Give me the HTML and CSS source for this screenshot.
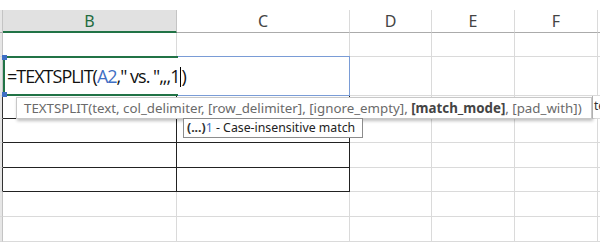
FILE: index.html
```html
<!DOCTYPE html>
<html lang="en">
<head>
  <meta charset="UTF-8" />
  <title>TEXTSPLIT</title>
  <link rel="stylesheet" href="styles.css">
</head>
<body>

  <div class="sheet">
    <!-- top strip -->
    <div class="gap"></div><div class="gap"></div><div class="gap"></div><div class="gap"></div><div class="gap"></div><div class="gap"></div><div class="gap"></div>

    <!-- column headers -->
    <div class="cell hd rh"></div>
    <div class="cell hd sel">B</div>
    <div class="cell hd">C</div>
    <div class="cell hd">D</div>
    <div class="cell hd">E</div>
    <div class="cell hd">F</div>
    <div class="cell hd end"></div>

    <!-- row 1 -->
    <div class="cell rh"></div><div class="cell"></div><div class="cell"></div><div class="cell"></div><div class="cell"></div><div class="cell"></div><div class="cell end"></div>
    <!-- row 2 (editing) -->
    <div class="cell rh"></div><div class="cell"></div><div class="cell"></div><div class="cell"></div><div class="cell"></div><div class="cell"></div><div class="cell end"></div>
    <!-- rows 3-6, bordered table -->
    <div class="cell rh bl"></div><div class="cell bd"></div><div class="cell bd"></div><div class="cell"></div><div class="cell"></div><div class="cell"></div><div class="cell end"></div>
    <div class="cell rh bl"></div><div class="cell bd"></div><div class="cell bd"></div><div class="cell"></div><div class="cell"></div><div class="cell"></div><div class="cell end"></div>
    <div class="cell rh bl"></div><div class="cell bd"></div><div class="cell bd"></div><div class="cell"></div><div class="cell"></div><div class="cell"></div><div class="cell end"></div>
    <div class="cell rh bl"></div><div class="cell bd"></div><div class="cell bd"></div><div class="cell"></div><div class="cell"></div><div class="cell"></div><div class="cell end"></div>
    <!-- rows 7-8 -->
    <div class="cell rh"></div><div class="cell"></div><div class="cell"></div><div class="cell"></div><div class="cell"></div><div class="cell"></div><div class="cell end"></div>
    <div class="cell rh"></div><div class="cell"></div><div class="cell"></div><div class="cell"></div><div class="cell"></div><div class="cell"></div><div class="cell end"></div>

    <!-- in-cell editor -->
    <div class="editor">
      <span class="formula">=TEXTSPLIT(<span class="ref">A2</span>," vs. ",,,1<span class="caret"></span>)</span>
    </div>
    <div class="active-cell">
      <span class="handle h-top"></span>
      <span class="handle h-bottom"></span>
    </div>

    <!-- function tooltip -->
    <div class="tip">TEXTSPLIT(text, col_delimiter, [row_delimiter], [ignore_empty], <b>[match_mode]</b>, [pad_with])</div>
    <div class="tip-edge">te</div>
    <div class="tip-list"><b>(...)</b><span class="num">1</span> - Case-insensitive match</div>
  </div>

</body>
</html>
```

FILE: styles.css
```css
body {
  margin: 0;
  background: #fff;
  font-family: 'Noto Sans', sans-serif;
}

.sheet {
  position: relative;
  width: 600px;
  height: 243px;
  overflow: hidden;
  display: grid;
  grid-template-columns: 3px 174px 173px 82px 83px 83px 2px;
  grid-template-rows: 10px 23px 24px 39px 23px 24px 25px 24px 25px 25px;
}

.gap {
  background: #fff;
}

.cell {
  box-sizing: border-box;
  border-right: 1px solid #dadada;
  border-bottom: 1px solid #dadada;
}

.cell.rh {
  background: #e6e6e6;
  border-right-color: #c4c4c4;
}

.cell.end {
  border-right: none;
}

.hd {
  background: #fff;
  border-bottom-color: #ababab;
  color: #444;
  font-size: 16px;
  text-align: center;
  line-height: 22px;
}

.hd.sel {
  background: #e1e1e1;
  color: #1e6b3f;
  border-right-color: #c4c4c4;
  border-bottom: 2px solid #217346;
}

.cell.bd {
  border-right-color: #222;
  border-bottom-color: #222;
}

.cell.bl {
  border-right-color: #333;
}

.editor {
  position: absolute;
  left: 3px;
  top: 56px;
  width: 347px;
  height: 40px;
  box-sizing: border-box;
  border: 1px solid #7a9cd6;
  background: #fff;
  display: flex;
  align-items: center;
  padding-left: 3px;
}

.formula {
  font-family: 'Open Sans', sans-serif;
  font-size: 18px;
  letter-spacing: -1px;
  color: #111;
}

.ref {
  color: #3f6fc4;
}

.caret {
  display: inline-block;
  width: 1px;
  height: 20px;
  background: #000;
  vertical-align: -4px;
  margin-left: 1px;
}

.active-cell {
  position: absolute;
  left: 3px;
  top: 56px;
  width: 175px;
  height: 40px;
  box-sizing: border-box;
  border: 2px solid #217346;
  border-right: none;
}

.handle {
  position: absolute;
  left: -3px;
  width: 5px;
  height: 5px;
  background: #3f6fc4;
}

.h-top {
  top: -3px;
}

.h-bottom {
  bottom: -3px;
}

.tip {
  position: absolute;
  left: 16px;
  top: 97px;
  width: 576px;
  height: 22px;
  box-sizing: border-box;
  background: #fff;
  border: 1px solid #c8c8c8;
  box-shadow: 1px 2px 3px rgba(0, 0, 0, 0.25);
  color: #6a6a6a;
  font-size: 13.3px;
  line-height: 20px;
  padding-left: 7px;
  white-space: nowrap;
}

.tip b {
  color: #444;
}

.tip-edge {
  position: absolute;
  left: 592px;
  top: 96px;
  width: 8px;
  height: 22px;
  box-sizing: border-box;
  background: #fff;
  border-left: 1px solid #b0b0b0;
  color: #333;
  font-size: 12px;
  line-height: 20px;
  padding-left: 1px;
  overflow: hidden;
}

.tip-list {
  position: absolute;
  left: 183px;
  top: 118px;
  width: 180px;
  height: 20px;
  box-sizing: border-box;
  background: #fff;
  border: 1px solid #8c8c8c;
  color: #222;
  font-size: 12.3px;
  line-height: 18px;
  padding-left: 3px;
  white-space: nowrap;
}

.tip-list b {
  color: #333;
}

.tip-list .num {
  color: #3f6fc4;
}
```
